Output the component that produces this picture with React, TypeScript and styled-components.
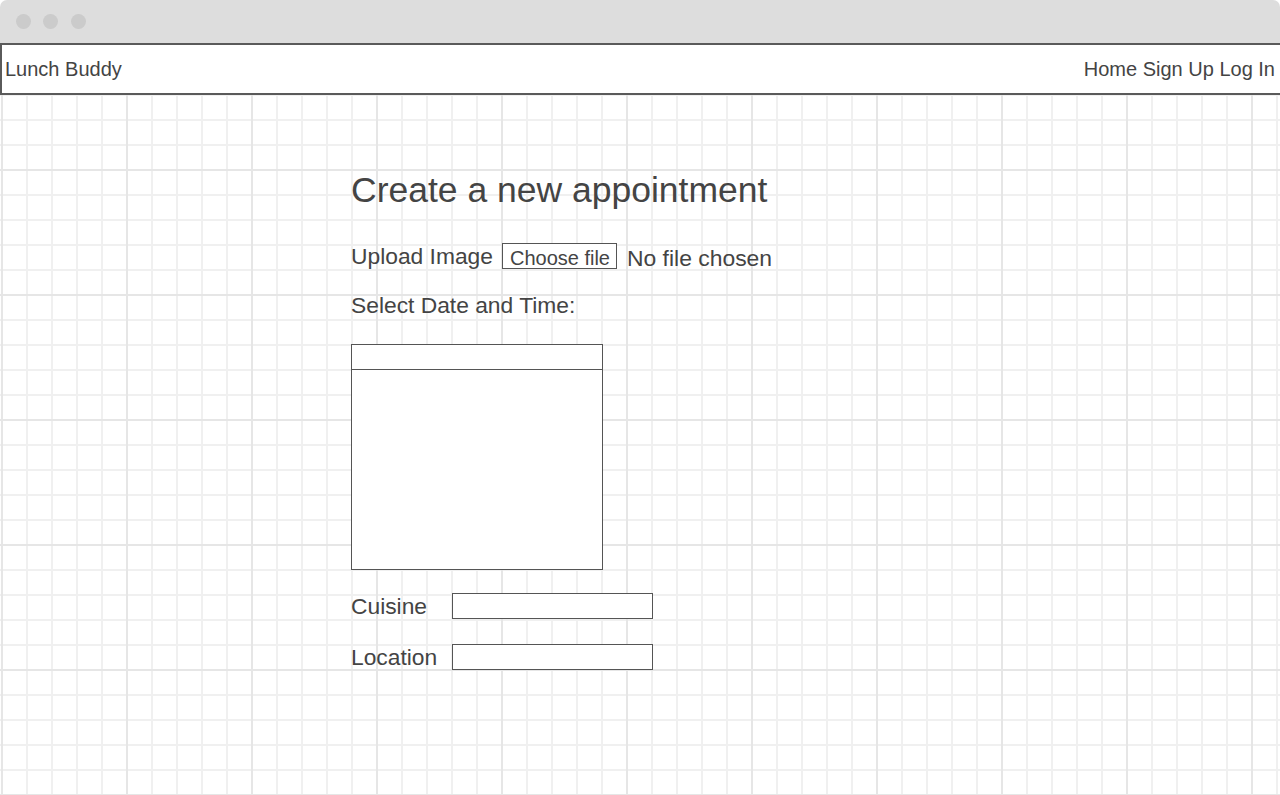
import React from "react";
import styled, { createGlobalStyle } from "styled-components";

const GlobalStyle = createGlobalStyle`
  html, body {
    margin: 0;
    padding: 0;
    background: #ffffff;
  }
  body {
    font-family: "Liberation Sans", Arial, Helvetica, sans-serif;
    color: #444444;
  }
  * { box-sizing: border-box; }
`;

const Window = styled.div`
  display: flex;
  flex-direction: column;
  width: 1280px;
  height: 795px;
  overflow: hidden;
`;

const TitleBar = styled.div`
  display: flex;
  align-items: center;
  gap: 12.5px;
  height: 43px;
  padding: 0 0 0 15.5px;
  background: #dddddd;
  border-radius: 7px 7px 0 0;
  flex-shrink: 0;
`;

const Dot = styled.span`
  width: 15px;
  height: 15px;
  border-radius: 50%;
  background: #cbcbcb;
`;

const NavBar = styled.nav`
  display: flex;
  align-items: center;
  justify-content: space-between;
  height: 52px;
  padding: 0 5px 0 3px;
  border: 2px solid #5a5a5a;
  border-right: none;
  background: #ffffff;
  font-size: 20px;
  line-height: 24px;
  flex-shrink: 0;
`;

const Brand = styled.span`
  color: #444444;
`;

const NavLinks = styled.div`
  display: flex;
  gap: 5.56px;
`;

const NavLink = styled.a`
  color: #444444;
  text-decoration: none;
  cursor: pointer;
`;

const Canvas = styled.main`
  flex: 1;
  background-color: #ffffff;
  background-image:
    linear-gradient(to bottom, #e6e6e6 0, #e6e6e6 1.6px, transparent 1.6px),
    linear-gradient(to right, #e6e6e6 0, #e6e6e6 1.6px, transparent 1.6px),
    linear-gradient(to bottom, #f0f0f0 0, #f0f0f0 1.6px, transparent 1.6px),
    linear-gradient(to right, #f0f0f0 0, #f0f0f0 1.6px, transparent 1.6px);
  background-size: 100% 125px, 125px 100%, 100% 25px, 25px 100%;
  background-position: 0 74px, 1px 0, 0 24px, 1px 0;
  padding: 75px 0 0 351px;
`;

const Form = styled.form`
  display: flex;
  flex-direction: column;
  align-items: flex-start;
  margin: 0;
`;

const Title = styled.h1`
  margin: 0;
  font-size: 35.5px;
  line-height: 40px;
  font-weight: 400;
  color: #444444;
  white-space: nowrap;
`;

const UploadRow = styled.div`
  display: flex;
  align-items: flex-start;
  height: 26px;
  margin-top: 33px;
`;

const Label = styled.label<{ $width?: number }>`
  display: block;
  font-size: 22.8px;
  line-height: 26px;
  color: #444444;
  white-space: nowrap;
  ${(p) => (p.$width ? `width: ${p.$width}px; flex-shrink: 0;` : "")}
`;

const FileButton = styled.button`
  height: 26px;
  margin: 0 10px 0 9px;
  padding: 4px 6px 0 7px;
  border: 1px solid #555555;
  border-radius: 0;
  background: #ffffff;
  font-family: "Liberation Sans", Arial, Helvetica, sans-serif;
  font-size: 20px;
  line-height: 20px;
  color: #444444;
  white-space: nowrap;
  overflow: visible;
  cursor: pointer;
`;

const FileStatus = styled.span`
  margin-top: 2px;
  font-size: 22.9px;
  line-height: 26px;
  color: #444444;
  white-space: nowrap;
`;

const SectionLabel = styled(Label)`
  margin-top: 23px;
`;

const DateTimeBox = styled.div`
  display: flex;
  flex-direction: column;
  width: 252px;
  height: 226px;
  margin-top: 26px;
  border: 1px solid #555555;
  background: #ffffff;
`;

const DateTimeHeader = styled.div`
  height: 25px;
  border-bottom: 1px solid #555555;
  flex-shrink: 0;
`;

const DateTimeBody = styled.div`
  flex: 1;
`;

const FieldRow = styled.div<{ $spacing: number }>`
  display: flex;
  align-items: flex-start;
  height: 26px;
  margin-top: ${(p) => p.$spacing}px;
`;

const TextInput = styled.input`
  width: 201px;
  height: 26px;
  margin: 0;
  padding: 0 4px;
  border: 1px solid #555555;
  border-radius: 0;
  background: #ffffff;
  font-family: "Liberation Sans", Arial, Helvetica, sans-serif;
  font-size: 18px;
  color: #444444;
  outline: none;
`;

export default function App() {
  return (
    <>
      <GlobalStyle />
      <Window>
        <TitleBar>
          <Dot />
          <Dot />
          <Dot />
        </TitleBar>
        <NavBar>
          <Brand>Lunch Buddy</Brand>
          <NavLinks>
            <NavLink>Home</NavLink>
            <NavLink>Sign Up</NavLink>
            <NavLink>Log In</NavLink>
          </NavLinks>
        </NavBar>
        <Canvas>
          <Form onSubmit={(e) => e.preventDefault()}>
            <Title>Create a new appointment</Title>
            <UploadRow>
              <Label>Upload Image</Label>
              <FileButton type="button">Choose file</FileButton>
              <FileStatus>No file chosen</FileStatus>
            </UploadRow>
            <SectionLabel>Select Date and Time:</SectionLabel>
            <DateTimeBox>
              <DateTimeHeader />
              <DateTimeBody />
            </DateTimeBox>
            <FieldRow $spacing={23}>
              <Label $width={101}>Cuisine</Label>
              <TextInput type="text" aria-label="Cuisine" />
            </FieldRow>
            <FieldRow $spacing={25}>
              <Label $width={101}>Location</Label>
              <TextInput type="text" aria-label="Location" />
            </FieldRow>
          </Form>
        </Canvas>
      </Window>
    </>
  );
}
